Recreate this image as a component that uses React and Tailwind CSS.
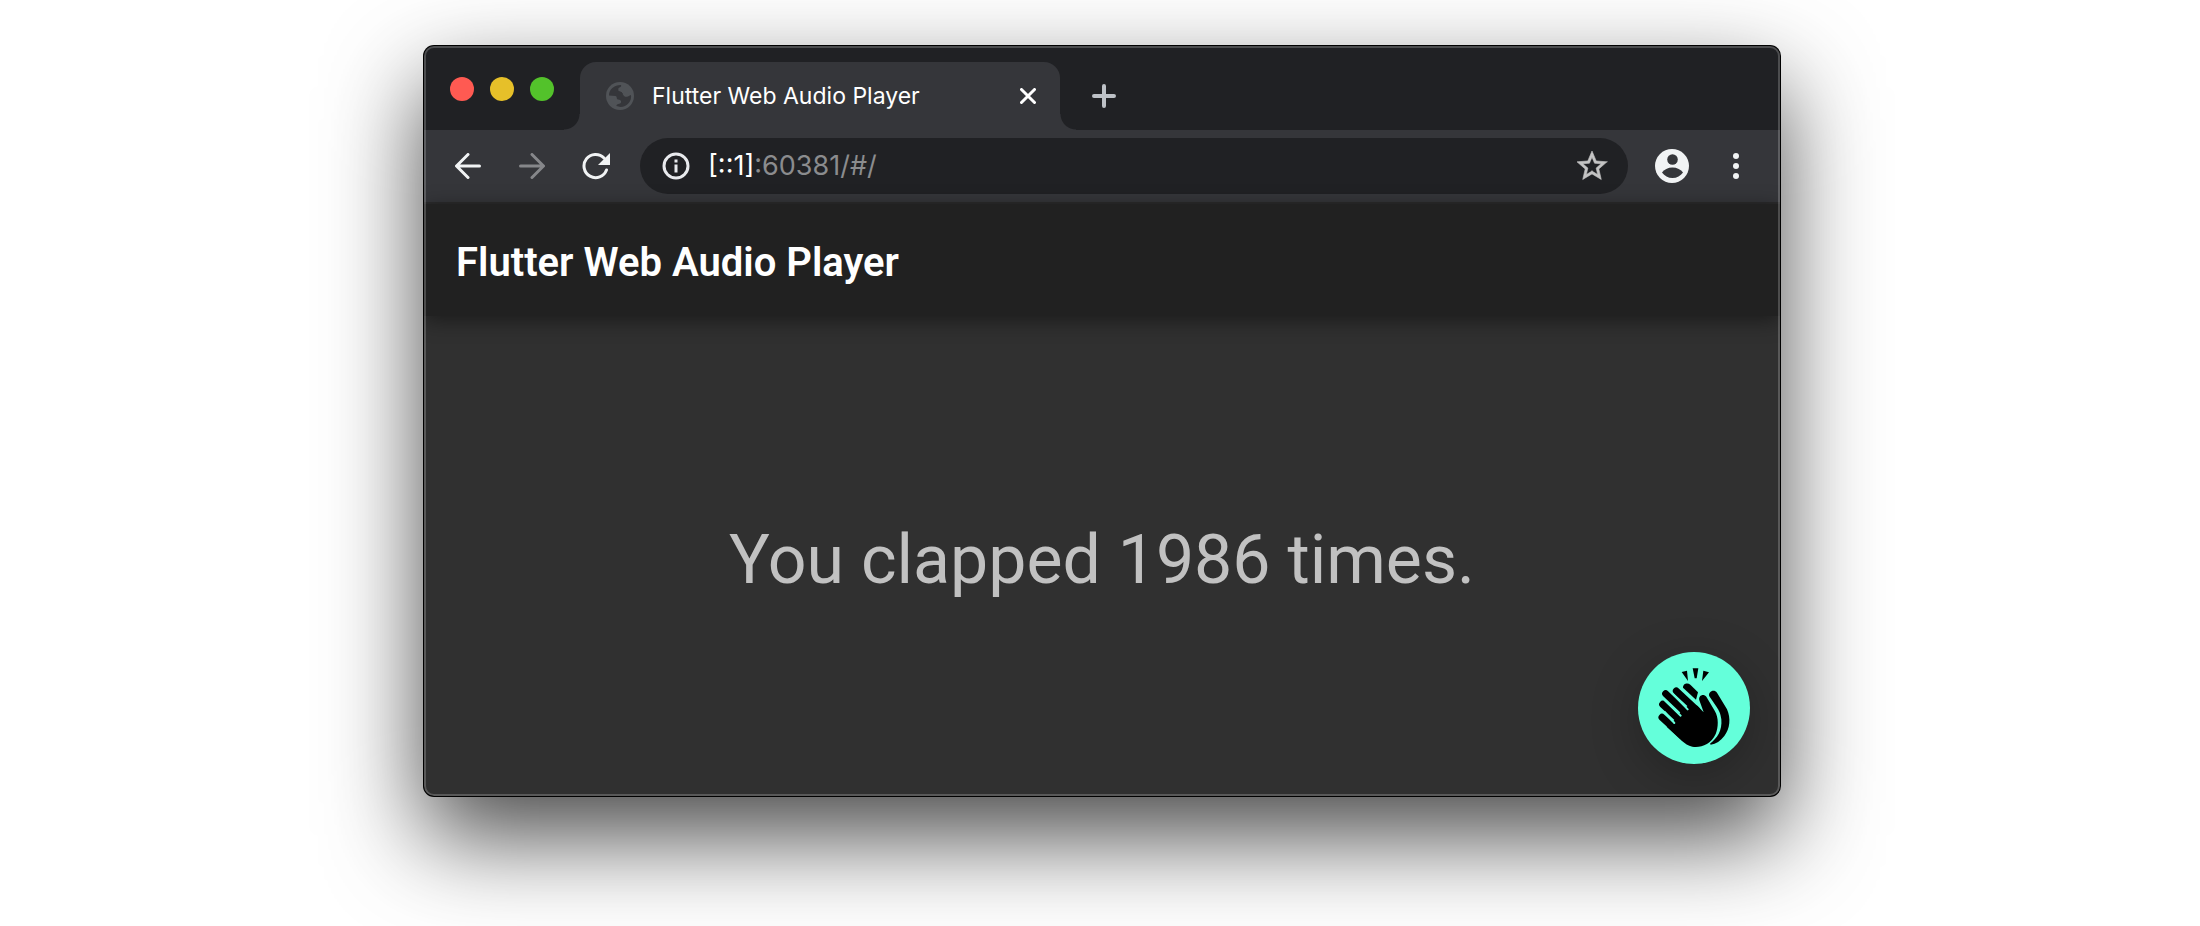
const lights = ["bg-[#ff5a52]", "bg-[#e6c029]", "bg-[#53c22b]"];

const Icon = ({ className, children, ...props }) => (
  <svg
    className={className}
    fill="none"
    stroke="currentColor"
    strokeLinecap="round"
    aria-hidden="true"
    {...props}
  >
    {children}
  </svg>
);

const GlobeIcon = () => (
  <Icon viewBox="0 0 28 28" className="size-7 shrink-0 text-[#505357]" stroke="none">
    <circle cx="14" cy="14" r="14" fill="currentColor" />
    <path
      d="M3 13.500 C3 7.500 8 3 15 3 C16 5.500 12.500 5 12 7 C11.500 8.500 13 9.500 15 10 C17 10.500 16 13.500 18 14.500 C20.500 15.500 23 14 25 13 C26 19 21 25 14.500 25 L10.500 24 C10 21.500 14.500 22.500 15 20.500 C15.500 18.500 14 17.500 12 17.500 C10 17 11.500 14.500 9.500 14 Z"
      fill="#35363a"
    />
    <path d="M12 7 C10.500 10 14 10 15.500 10.500 C17 11.500 16 14 18.500 15" stroke="#35363a" strokeWidth="1" />
  </Icon>
);

const BackIcon = () => (
  <Icon viewBox="0 0 26 26" className="size-[26px]" strokeWidth="3" strokeLinejoin="round">
    <path d="M24.500 13 H2 M13 1.500 L1.500 13 L13 24.500" />
  </Icon>
);

const ForwardIcon = () => (
  <Icon viewBox="0 0 26 26" className="size-[26px]" strokeWidth="3" strokeLinejoin="round">
    <path d="M1.500 13 H24 M13 1.500 L24.500 13 L13 24.500" />
  </Icon>
);

const ReloadIcon = () => (
  <Icon viewBox="0 0 28 28" className="size-7" strokeWidth="3">
    <path d="M22 6 A11.600 11.600 0 1 0 24.500 18" />
    <path d="M28 1 V13 H16 Z" fill="currentColor" stroke="none" />
  </Icon>
);

const InfoIcon = () => (
  <Icon viewBox="0 0 28 28" className="size-7 shrink-0 text-[#e8eaed]" strokeWidth="3">
    <circle cx="14" cy="14" r="12" />
    <path d="M14 12.500 V20.500 M14 7.500 V10.500" strokeLinecap="butt" />
  </Icon>
);

const StarIcon = () => (
  <Icon viewBox="0 0 24 24" className="size-9 text-[#c4c4c4]" stroke="currentColor" strokeWidth="0.4">
    <path
      fill="currentColor"
      d="M22 9.240l-7.190-.62L12 2 9.190 8.630 2 9.240l5.460 4.730L5.820 21 12 17.270 18.180 21l-1.630-7.030L22 9.240zM12 15.400l-3.760 2.270 1-4.280-3.320-2.880 4.380-.38L12 6.100l1.710 4.040 4.380.38-3.320 2.880 1 4.280L12 15.400z"
    />
  </Icon>
);

const AccountIcon = () => (
  <Icon viewBox="0 0 34 34" className="size-[34px] shrink-0" stroke="none">
    <circle cx="17" cy="17" r="17" fill="currentColor" />
    <circle cx="17.500" cy="10.500" r="5.300" fill="#35363a" />
    <path d="M7 23.500 C9 20.500 13 18.500 17.500 18.500 C22 18.500 26 20.500 28 23.500 C25.500 27 22 29 17.500 29 C13 29 9.500 27 7 23.500 Z" fill="#35363a" />
  </Icon>
);

const MenuIcon = () => (
  <Icon viewBox="0 0 26 26" className="size-[26px]" stroke="none">
    <g fill="currentColor">
      <circle cx="13" cy="3" r="3" />
      <circle cx="13" cy="13" r="3" />
      <circle cx="13" cy="23" r="3" />
    </g>
  </Icon>
);

const ClapIcon = () => (
  <svg viewBox="84 66 336 336" className="size-full" aria-hidden="true">
    <path d="M215 126 L231 122 L234 153 Z M248 115 H265 L260 145 H254 Z M280 122 L297 127 L276 153 Z" />
    {/* back hand */}
    <path d="M298 199 C293 187 311 175 321 188 L351 238 C363 266 360 296 343 318 C332 333 318 342 302 344 L300 341 C322 325 337 302 334 268 C332 250 326 240 320 231 Z" />
    {/* fingers */}
    <g stroke="#000" strokeWidth="21" strokeLinecap="round">
      <path d="M156 262 L215 316" />
      <path d="M158 223 L220 280" />
      <path d="M167 191 L235 256" />
      <path d="M199 183 L260 240" />
    </g>
    <path d="M219 173 C218 161 233 157 241 164 L264 187 L258 209 Z" />
    {/* palm */}
    <path d="M180 280 L193 270 L212 245 L236 225 L262 227 L281 247 L268 211 C264 196 281 189 289 200 L314 242 C327 264 325 292 317 312 C302 344 272 354 247 350 C234 347 225 341 216 333 L170 290 Z" />
    <g stroke="#64ffda" strokeWidth="6" strokeLinecap="round" fill="none">
      <path d="M164 246 L193 279" />
      <path d="M166 212 L212 257" />
      <path d="M187 190 L233 238" />
    </g>
  </svg>
);

const iconButton = "flex size-8 shrink-0 items-center justify-center";

export default function App() {
  return (
    <div className="flex min-h-screen justify-center overflow-hidden bg-white pt-[46px] pb-[130px] pl-1 font-['Inter',sans-serif]">
      <section className="relative flex w-full max-w-[1356px] flex-col overflow-hidden rounded-[10px] bg-[#303030] shadow-[0_0_0_1px_#000,0_40px_96px_rgba(0,0,0,0.72)]">
        {/* tab strip */}
        <div className="flex h-[84px] shrink-0 bg-[#202124] pt-4">
          <div className="flex w-[156px] shrink-0 gap-4 pt-[15px] pl-[26px]">
            {lights.map((color) => (
              <span key={color} className={`size-6 rounded-full ${color}`} />
            ))}
          </div>

          <div className="relative flex w-[480px] items-center rounded-t-2xl bg-[#35363a] pr-6 pl-[26px]">
            <span className="absolute bottom-0 -left-4 size-4 bg-[radial-gradient(circle_at_0_0,#202124_15px,#35363a_16px)]" />
            <span className="absolute -right-4 bottom-0 size-4 bg-[radial-gradient(circle_at_100%_0,#202124_15px,#35363a_16px)]" />
            <GlobeIcon />
            <span className="ml-[18px] flex-1 truncate text-[23px] leading-8 text-white">
              Flutter Web Audio Player
            </span>
            <button aria-label="Close tab" className="text-white">
              <Icon viewBox="0 0 16 16" className="size-4" strokeWidth="3">
                <path d="M1.500 1.500 L14.500 14.500 M14.500 1.500 L1.500 14.500" />
              </Icon>
            </button>
          </div>

          <button aria-label="New tab" className="ml-8 text-[#bdc1c6]">
            <Icon viewBox="0 0 24 24" className="size-6" strokeWidth="4">
              <path d="M12 2 V22 M2 12 H22" />
            </Icon>
          </button>
        </div>

        {/* toolbar */}
        <div className="flex h-[74px] shrink-0 items-center border-b-2 border-[#2b2b2c] bg-[#35363a] px-7 text-[#f1f3f4]">
          <div className="flex gap-8">
            <button aria-label="Back" className={iconButton}>
              <BackIcon />
            </button>
            <button aria-label="Forward" className={`${iconButton} text-[#86878a]`}>
              <ForwardIcon />
            </button>
            <button aria-label="Reload" className={iconButton}>
              <ReloadIcon />
            </button>
          </div>

          <div className="ml-7 flex h-14 flex-1 items-center rounded-full bg-[#202124] pr-[18px] pl-[22px]">
            <InfoIcon />
            <a href="#/" className="ml-[18px] flex-1 text-[27px] leading-9 text-[#8b8c8e]">
              <span className="text-white">[::1]</span>:60381/#/
            </a>
            <button aria-label="Bookmark this tab">
              <StarIcon />
            </button>
          </div>

          <button aria-label="Profile" className={`${iconButton} ml-7`}>
            <AccountIcon />
          </button>
          <button aria-label="Menu" className={`${iconButton} ml-8`}>
            <MenuIcon />
          </button>
        </div>

        {/* page */}
        <header className="flex h-28 shrink-0 items-center bg-[#212121] px-8 pt-1.5 shadow-[0_4px_20px_rgba(0,0,0,0.45)]">
          <h1 className="font-['Roboto',sans-serif] text-[40px] leading-[48px] font-semibold text-white">
            Flutter Web Audio Player
          </h1>
        </header>
        <main className="flex flex-1 items-center justify-center pt-2">
          <p className="font-['Roboto',sans-serif] text-[68px] leading-[80px] text-[#c1c1c1]">
            You clapped 1986 times.
          </p>
        </main>

        <button
          aria-label="Clap"
          className="absolute right-[30px] bottom-8 size-28 rounded-full bg-[#64ffda] shadow-[0_12px_48px_rgba(0,0,0,0.25)]"
        >
          <ClapIcon />
        </button>

        {/* rim light along the window edge */}
        <div className="pointer-events-none absolute inset-0 rounded-[10px] border-2 border-white/20" />
      </section>
    </div>
  );
}
